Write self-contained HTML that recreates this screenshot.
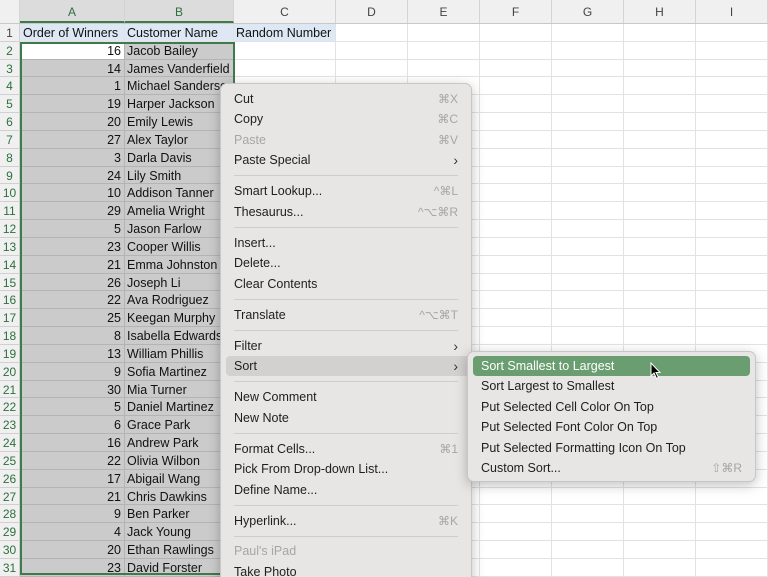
<!DOCTYPE html>
<html><head><meta charset="utf-8"><style>
*{margin:0;padding:0;box-sizing:border-box}
html,body{width:768px;height:577px;overflow:hidden}
body{background:#fff;font-family:"Liberation Sans",sans-serif;position:relative}
.hdr{position:absolute;left:0;top:0;height:24px;width:768px;display:flex;background:#f0f0f0;border-bottom:1px solid #c8c8c8}
.hdr div{border-right:1px solid #d4d4d4;text-align:center;font-size:12px;line-height:24px;color:#444}
.hdr .s{background:#dcdcdc;color:#2f6f3f;border-bottom:2px solid #3d7b4c}
.grid{position:absolute;left:0;top:24px;width:768px;display:grid;grid-auto-rows:17.833px}
.r{display:flex}
.r div{border-right:1px solid #e2e2e2;border-bottom:1px solid #e2e2e2;font-size:12.5px;line-height:18px;white-space:nowrap;overflow:hidden;color:#111}
.r .n{background:#f0f0f0;color:#2f6f3f;text-align:center;font-size:12px;border-color:#d0d0d0}
.r .a{text-align:right;padding-right:3px;background:#cbcbcb;border-color:#b4b4b4}
.r .b{padding-left:2px;background:#cbcbcb;border-color:#b4b4b4;overflow:visible}
.w20{width:20px}.w105{width:105px}.w109{width:109px}.w102{width:102px}.w72{width:72px}
.sel{position:absolute;left:20px;top:42px;width:215px;height:533px;border:2px solid #3d7b4c}
.menu{position:absolute;left:220px;top:83px;width:252px;height:510px;background:#e8e6e4;border:1px solid #c9c7c5;border-radius:7px;box-shadow:0 3px 12px rgba(0,0,0,.25);font-size:12.5px;color:#1e1e1e}
.mi{position:absolute;left:5px;right:5px;height:20px;line-height:20px;padding-left:8px;border-radius:4px}
.mi .k{position:absolute;right:8px;top:0;color:#a8a6a4;font-size:12px}
.mi.d{color:#a8a6a4}
.sep{position:absolute;left:13px;right:13px;height:1px;background:#cfcdcb}
.sub{position:absolute;left:467px;top:351px;width:289px;height:131px;background:#e8e6e4;border:1px solid #c9c7c5;border-radius:7px;box-shadow:0 3px 12px rgba(0,0,0,.25);font-size:12.5px;color:#1e1e1e}
.hl{background:#6a9d70;color:#fff}
</style></head><body>
<div class="hdr"><div class="w20"></div><div class="w105 s">A</div><div class="w109 s">B</div><div class="w102">C</div><div class="w72">D</div><div class="w72">E</div><div class="w72">F</div><div class="w72">G</div><div class="w72">H</div><div class="w72">I</div></div>
<div class="grid">
<div class="r"><div class="w20 n" style="color:#444">1</div><div class="w105" style="background:#dde8f4;padding-left:3px">Order of Winners</div><div class="w109" style="background:#dde8f4;padding-left:2px">Customer Name</div><div class="w102" style="background:#dde8f4;padding-left:2px">Random Number</div><div class="w72"></div><div class="w72"></div><div class="w72"></div><div class="w72"></div><div class="w72"></div><div class="w72"></div></div>
<div class="r"><div class="w20 n">2</div><div class="w105 a" style="background:#fff">16</div><div class="w109 b">Jacob Bailey</div><div class="w102"></div><div class="w72"></div><div class="w72"></div><div class="w72"></div><div class="w72"></div><div class="w72"></div><div class="w72"></div></div>
<div class="r"><div class="w20 n">3</div><div class="w105 a">14</div><div class="w109 b">James Vanderfield</div><div class="w102"></div><div class="w72"></div><div class="w72"></div><div class="w72"></div><div class="w72"></div><div class="w72"></div><div class="w72"></div></div>
<div class="r"><div class="w20 n">4</div><div class="w105 a">1</div><div class="w109 b">Michael Sanderson</div><div class="w102"></div><div class="w72"></div><div class="w72"></div><div class="w72"></div><div class="w72"></div><div class="w72"></div><div class="w72"></div></div>
<div class="r"><div class="w20 n">5</div><div class="w105 a">19</div><div class="w109 b">Harper Jackson</div><div class="w102"></div><div class="w72"></div><div class="w72"></div><div class="w72"></div><div class="w72"></div><div class="w72"></div><div class="w72"></div></div>
<div class="r"><div class="w20 n">6</div><div class="w105 a">20</div><div class="w109 b">Emily Lewis</div><div class="w102"></div><div class="w72"></div><div class="w72"></div><div class="w72"></div><div class="w72"></div><div class="w72"></div><div class="w72"></div></div>
<div class="r"><div class="w20 n">7</div><div class="w105 a">27</div><div class="w109 b">Alex Taylor</div><div class="w102"></div><div class="w72"></div><div class="w72"></div><div class="w72"></div><div class="w72"></div><div class="w72"></div><div class="w72"></div></div>
<div class="r"><div class="w20 n">8</div><div class="w105 a">3</div><div class="w109 b">Darla Davis</div><div class="w102"></div><div class="w72"></div><div class="w72"></div><div class="w72"></div><div class="w72"></div><div class="w72"></div><div class="w72"></div></div>
<div class="r"><div class="w20 n">9</div><div class="w105 a">24</div><div class="w109 b">Lily Smith</div><div class="w102"></div><div class="w72"></div><div class="w72"></div><div class="w72"></div><div class="w72"></div><div class="w72"></div><div class="w72"></div></div>
<div class="r"><div class="w20 n">10</div><div class="w105 a">10</div><div class="w109 b">Addison Tanner</div><div class="w102"></div><div class="w72"></div><div class="w72"></div><div class="w72"></div><div class="w72"></div><div class="w72"></div><div class="w72"></div></div>
<div class="r"><div class="w20 n">11</div><div class="w105 a">29</div><div class="w109 b">Amelia Wright</div><div class="w102"></div><div class="w72"></div><div class="w72"></div><div class="w72"></div><div class="w72"></div><div class="w72"></div><div class="w72"></div></div>
<div class="r"><div class="w20 n">12</div><div class="w105 a">5</div><div class="w109 b">Jason Farlow</div><div class="w102"></div><div class="w72"></div><div class="w72"></div><div class="w72"></div><div class="w72"></div><div class="w72"></div><div class="w72"></div></div>
<div class="r"><div class="w20 n">13</div><div class="w105 a">23</div><div class="w109 b">Cooper Willis</div><div class="w102"></div><div class="w72"></div><div class="w72"></div><div class="w72"></div><div class="w72"></div><div class="w72"></div><div class="w72"></div></div>
<div class="r"><div class="w20 n">14</div><div class="w105 a">21</div><div class="w109 b">Emma Johnston</div><div class="w102"></div><div class="w72"></div><div class="w72"></div><div class="w72"></div><div class="w72"></div><div class="w72"></div><div class="w72"></div></div>
<div class="r"><div class="w20 n">15</div><div class="w105 a">26</div><div class="w109 b">Joseph Li</div><div class="w102"></div><div class="w72"></div><div class="w72"></div><div class="w72"></div><div class="w72"></div><div class="w72"></div><div class="w72"></div></div>
<div class="r"><div class="w20 n">16</div><div class="w105 a">22</div><div class="w109 b">Ava Rodriguez</div><div class="w102"></div><div class="w72"></div><div class="w72"></div><div class="w72"></div><div class="w72"></div><div class="w72"></div><div class="w72"></div></div>
<div class="r"><div class="w20 n">17</div><div class="w105 a">25</div><div class="w109 b">Keegan Murphy</div><div class="w102"></div><div class="w72"></div><div class="w72"></div><div class="w72"></div><div class="w72"></div><div class="w72"></div><div class="w72"></div></div>
<div class="r"><div class="w20 n">18</div><div class="w105 a">8</div><div class="w109 b">Isabella Edwards</div><div class="w102"></div><div class="w72"></div><div class="w72"></div><div class="w72"></div><div class="w72"></div><div class="w72"></div><div class="w72"></div></div>
<div class="r"><div class="w20 n">19</div><div class="w105 a">13</div><div class="w109 b">William Phillis</div><div class="w102"></div><div class="w72"></div><div class="w72"></div><div class="w72"></div><div class="w72"></div><div class="w72"></div><div class="w72"></div></div>
<div class="r"><div class="w20 n">20</div><div class="w105 a">9</div><div class="w109 b">Sofia Martinez</div><div class="w102"></div><div class="w72"></div><div class="w72"></div><div class="w72"></div><div class="w72"></div><div class="w72"></div><div class="w72"></div></div>
<div class="r"><div class="w20 n">21</div><div class="w105 a">30</div><div class="w109 b">Mia Turner</div><div class="w102"></div><div class="w72"></div><div class="w72"></div><div class="w72"></div><div class="w72"></div><div class="w72"></div><div class="w72"></div></div>
<div class="r"><div class="w20 n">22</div><div class="w105 a">5</div><div class="w109 b">Daniel Martinez</div><div class="w102"></div><div class="w72"></div><div class="w72"></div><div class="w72"></div><div class="w72"></div><div class="w72"></div><div class="w72"></div></div>
<div class="r"><div class="w20 n">23</div><div class="w105 a">6</div><div class="w109 b">Grace Park</div><div class="w102"></div><div class="w72"></div><div class="w72"></div><div class="w72"></div><div class="w72"></div><div class="w72"></div><div class="w72"></div></div>
<div class="r"><div class="w20 n">24</div><div class="w105 a">16</div><div class="w109 b">Andrew Park</div><div class="w102"></div><div class="w72"></div><div class="w72"></div><div class="w72"></div><div class="w72"></div><div class="w72"></div><div class="w72"></div></div>
<div class="r"><div class="w20 n">25</div><div class="w105 a">22</div><div class="w109 b">Olivia Wilbon</div><div class="w102"></div><div class="w72"></div><div class="w72"></div><div class="w72"></div><div class="w72"></div><div class="w72"></div><div class="w72"></div></div>
<div class="r"><div class="w20 n">26</div><div class="w105 a">17</div><div class="w109 b">Abigail Wang</div><div class="w102"></div><div class="w72"></div><div class="w72"></div><div class="w72"></div><div class="w72"></div><div class="w72"></div><div class="w72"></div></div>
<div class="r"><div class="w20 n">27</div><div class="w105 a">21</div><div class="w109 b">Chris Dawkins</div><div class="w102"></div><div class="w72"></div><div class="w72"></div><div class="w72"></div><div class="w72"></div><div class="w72"></div><div class="w72"></div></div>
<div class="r"><div class="w20 n">28</div><div class="w105 a">9</div><div class="w109 b">Ben Parker</div><div class="w102"></div><div class="w72"></div><div class="w72"></div><div class="w72"></div><div class="w72"></div><div class="w72"></div><div class="w72"></div></div>
<div class="r"><div class="w20 n">29</div><div class="w105 a">4</div><div class="w109 b">Jack Young</div><div class="w102"></div><div class="w72"></div><div class="w72"></div><div class="w72"></div><div class="w72"></div><div class="w72"></div><div class="w72"></div></div>
<div class="r"><div class="w20 n">30</div><div class="w105 a">20</div><div class="w109 b">Ethan Rawlings</div><div class="w102"></div><div class="w72"></div><div class="w72"></div><div class="w72"></div><div class="w72"></div><div class="w72"></div><div class="w72"></div></div>
<div class="r"><div class="w20 n">31</div><div class="w105 a">23</div><div class="w109 b">David Forster</div><div class="w102"></div><div class="w72"></div><div class="w72"></div><div class="w72"></div><div class="w72"></div><div class="w72"></div><div class="w72"></div></div>
</div>
<div class="sel"></div>
<div class="menu">
<div class="mi" style="top:5px">Cut<span class="k">⌘X</span></div>
<div class="mi" style="top:25px">Copy<span class="k">⌘C</span></div>
<div class="mi d" style="top:46px">Paste<span class="k">⌘V</span></div>
<div class="mi" style="top:66px">Paste Special<span class="k" style="color:#333;font-size:14px">›</span></div>
<div class="sep" style="top:91px"></div>
<div class="mi" style="top:97px">Smart Lookup...<span class="k">^⌘L</span></div>
<div class="mi" style="top:118px">Thesaurus...<span class="k">^⌥⌘R</span></div>
<div class="sep" style="top:143px"></div>
<div class="mi" style="top:149px">Insert...</div>
<div class="mi" style="top:169px">Delete...</div>
<div class="mi" style="top:190px">Clear Contents</div>
<div class="sep" style="top:215px"></div>
<div class="mi" style="top:221px">Translate<span class="k">^⌥⌘T</span></div>
<div class="sep" style="top:246px"></div>
<div class="mi" style="top:252px">Filter<span class="k" style="color:#333;font-size:14px">›</span></div>
<div class="mi" style="top:272px;background:#d3d1cf;border-radius:4px 0 0 4px;right:0">Sort<span class="k" style="color:#333;font-size:14px;right:13px">›</span></div>
<div class="sep" style="top:297px"></div>
<div class="mi" style="top:303px">New Comment</div>
<div class="mi" style="top:324px">New Note</div>
<div class="sep" style="top:349px"></div>
<div class="mi" style="top:355px">Format Cells...<span class="k">⌘1</span></div>
<div class="mi" style="top:375px">Pick From Drop-down List...</div>
<div class="mi" style="top:396px">Define Name...</div>
<div class="sep" style="top:421px"></div>
<div class="mi" style="top:427px">Hyperlink...<span class="k">⌘K</span></div>
<div class="sep" style="top:452px"></div>
<div class="mi d" style="top:457px">Paul's iPad</div>
<div class="mi" style="top:478px">Take Photo</div>
</div>
<div class="sub">
<div class="mi hl" style="top:4px">Sort Smallest to Largest</div>
<div class="mi" style="top:24px">Sort Largest to Smallest</div>
<div class="mi" style="top:45px">Put Selected Cell Color On Top</div>
<div class="mi" style="top:65px">Put Selected Font Color On Top</div>
<div class="mi" style="top:86px">Put Selected Formatting Icon On Top</div>
<div class="mi" style="top:106px">Custom Sort...<span class="k">⇧⌘R</span></div>
</div>
<svg style="position:absolute;left:650px;top:362px" width="12" height="18" viewBox="0 0 12 18"><path d="M1 1 L1 14 L4 11 L6.5 16.5 L8.5 15.5 L6 10.5 L10 10.5 Z" fill="#000" stroke="#fff" stroke-width="1"/></svg>
</body></html>
